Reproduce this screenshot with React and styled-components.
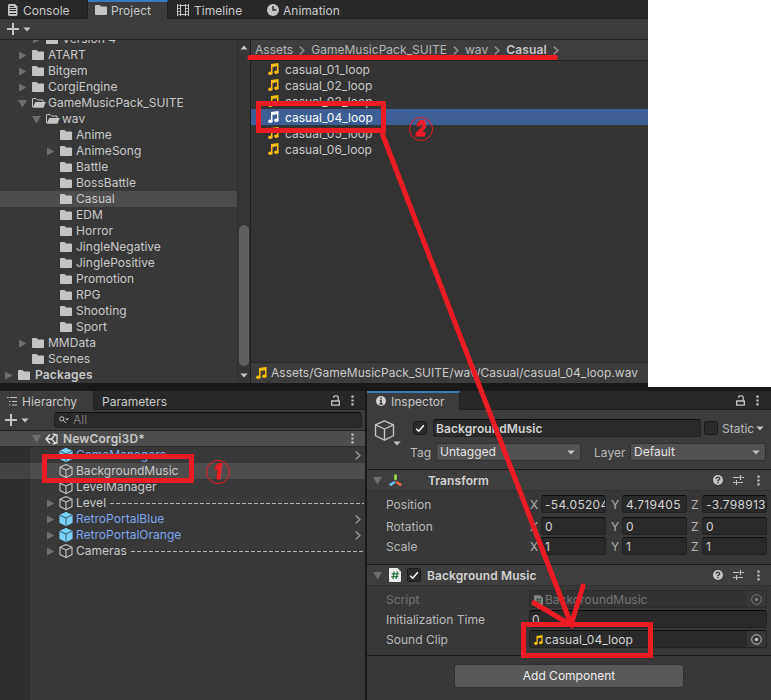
import React from "react";
import styled, { createGlobalStyle } from "styled-components";

const GlobalStyle = createGlobalStyle`
  * {
    box-sizing: border-box;
  }

  body {
    margin: 0;
    background: #fff;
    font-family: Inter, "Liberation Sans", sans-serif;
    font-size: 12px;
    line-height: 16px;
    letter-spacing: 0.02px;
    color: #c8c8c8;
    overflow: hidden;
  }

  svg {
    display: block;
    flex: none;
  }
`

const Page = styled.div`
  position: relative;
  width: 771px;
  height: 700px;
  display: flex;
  flex-direction: column;
`

const ProjectWindow = styled.section`
  width: 648px;
  height: 387px;
  flex: none;
  display: flex;
  flex-direction: column;
  background: #383838;
  border-bottom: 4px solid #191919;
`

const TabBar = styled.div`
  display: flex;
  flex: none;
  height: 19px;
  background: #282828;
`

const Tab = styled.div`
  display: flex;
  align-items: center;
  width: ${p => p.$width}px;
  padding: ${p => p.$pad || "0 0 0 7px"};
  gap: ${p => p.$gap || 5}px;
  background: ${p => p.$active ? "#3c3c3c" : "#282828"};
  border-top: 2px solid ${p => p.$focus ? "#3a79bb" : "transparent"};
  border-right: 1px solid ${p => p.$plain ? "transparent" : "#1f1f1f"};
  border-bottom: 1px solid ${p => p.$active ? "#3c3c3c" : "#1f1f1f"};
  white-space: nowrap;
`

const TabLabel = styled.span`
  padding-top: 2px;
`

const TabTools = styled.div`
  display: flex;
  flex: 1;
  align-items: center;
  justify-content: flex-end;
  gap: 11px;
  padding-right: ${p => p.$right}px;
  border-bottom: 1px solid #1f1f1f;
`

const Toolbar = styled.div`
  display: flex;
  align-items: center;
  flex: none;
  height: 21px;
  padding-left: ${p => p.$left}px;
  gap: 4px;
  background: #3c3c3c;
  border-bottom: 1px solid #202020;
`

const ProjectBody = styled.div`
  display: flex;
  flex: 1;
  min-height: 0;
`

const Tree = styled.div`
  width: 237px;
  height: 343px;
  overflow: hidden;
  display: flex;
  flex-direction: column;
  justify-content: flex-end;
`

const TreeRow = styled.div`
  display: flex;
  align-items: center;
  flex: none;
  height: 16px;
  padding-left: ${p => 4 + p.$depth * 14}px;
  background: ${p => p.$selected ? "#4d4d4d" : "transparent"};
  font-weight: ${p => p.$bold ? 600 : 400};
  letter-spacing: ${p => p.$bold ? "0.15px" : "inherit"};
  white-space: nowrap;
`

const FoldSlot = styled.span`
  width: ${p => p.$width || 14}px;
  display: flex;
  flex: none;
`

const TreeLabel = styled.span`
  margin-left: ${p => p.$gap || 3}px;
`

const Scrollbar = styled.div`
  width: 14px;
  display: flex;
  flex-direction: column;
  align-items: center;
  justify-content: space-between;
  padding: 5px 1px 5px 0;
  background: #353535;
  border-right: 1px solid #1d1d1d;
  border-left: 1px solid #303030;
`

const Thumb = styled.div`
  width: 10px;
  height: 141px;
  margin: auto 0 7px;
  border-radius: 5px;
  background: #5f5f5f;
`

const Files = styled.div`
  flex: 1;
  min-width: 0;
  display: flex;
  flex-direction: column;
  background: #333;
`

const Breadcrumb = styled.div`
  display: flex;
  align-items: center;
  height: 21px;
  padding-left: 4px;
  gap: 6px;
  background: #3e3e3e;
  border-bottom: 1px solid #242424;
  color: #b4b4b4;
  white-space: nowrap;

  b {
    font-weight: 600;
    letter-spacing: 0.15px;
    color: #c4c4c4;
  }
`

const FileList = styled.div`
  flex: 1;
`

const FileRow = styled.div`
  display: flex;
  align-items: center;
  height: 16px;
  padding-left: 17px;
  gap: 6px;
  background: ${p => p.$selected ? "#3e5f96" : "transparent"};
  color: ${p => p.$selected ? "#fff" : "#c8c8c8"};

  span {
    padding-top: 2px;
  }
`

const PathBar = styled.div`
  display: flex;
  align-items: center;
  height: 21px;
  padding-left: 5px;
  gap: 4px;
  background: #3c3c3c;
  border-top: 1px solid #282828;
  white-space: nowrap;
`

const BottomWindows = styled.div`
  display: flex;
  height: 313px;
  background: #191919;
  padding-top: 4px;
  gap: 2px;
`

const HierarchyWindow = styled.section`
  width: 365px;
  display: flex;
  flex-direction: column;
  background: #383838;
`

const SearchBox = styled.div`
  display: flex;
  align-items: center;
  width: 308px;
  height: 16px;
  margin-left: 21px;
  padding-left: 4px;
  gap: 4px;
  color: #7a7a7a;
  background: #2a2a2a;
  border: 1px solid #212121;
  border-top-color: #0f0f0f;
  border-radius: 4px;
`

const SceneRow = styled.div`
  display: flex;
  align-items: center;
  flex: none;
  height: 16px;
  padding: 0 11px 0 32px;
  background: #4d4d4d;
  border-bottom: 1px solid #2b2b2b;
  font-weight: 600;
  letter-spacing: 0.15px;
`

const Spacer = styled.span`
  flex: 1;
`

const ObjectList = styled.div`
  flex: 1;
  background: linear-gradient(90deg, #2e2e2e 30px, #383838 30px);
`

const ObjectRow = styled.div`
  display: flex;
  align-items: center;
  height: 16px;
  padding: 0 4px 0 46px;
  color: ${p => p.$prefab ? "#7fa7ec" : "#c8c8c8"};
  background: ${p => p.$selected ? "linear-gradient(90deg, #424242 30px, #4d4d4d 30px)" : "none"};
  white-space: nowrap;
`

const Dashes = styled.span`
  flex: 1;
  height: 1px;
  margin: 0 -3px 0 4px;
  background: repeating-linear-gradient(90deg, #b4b4b4 0 4px, transparent 4px 6px);
`

const InspectorWindow = styled.section`
  width: 404px;
  display: flex;
  flex-direction: column;
  background: #383838;
`

const ObjectHeader = styled.div`
  display: flex;
  height: 60px;
  flex: none;
  padding: 9px 4px 0 7px;
  background: #3c3c3c;
  border-bottom: 1px solid #1a1a1a;
`

const ObjectIcon = styled.div`
  display: flex;
  width: 28px;
  padding-top: 1px;
  align-items: flex-start;

  svg:last-child {
    margin: 21px 0 0 -2px;
  }
`

const HeaderLines = styled.div`
  flex: 1;
  display: flex;
  flex-direction: column;
  gap: 6px;
`

const Line = styled.div`
  display: flex;
  align-items: center;
  height: 18px;
  padding-left: ${p => p.$left || 0}px;
`

const Checkbox = styled.span`
  width: 14px;
  height: 14px;
  flex: none;
  display: flex;
  align-items: center;
  justify-content: center;
  background: #2a2a2a;
  border: 1px solid #1b1b1b;
  border-radius: 2px;
`

const Field = styled.div`
  display: flex;
  align-items: center;
  width: ${p => p.$width}px;
  height: 18px;
  flex: none;
  padding: 2px 0 0 2px;
  overflow: hidden;
  color: ${p => p.$dim ? "#747474" : "#d2d2d2"};
  background: ${p => p.$dim ? "#323232" : "#2a2a2a"};
  border: 1px solid ${p => p.$dim ? "#2c2c2c" : "#212121"};
  border-top-color: ${p => p.$dim ? "#2c2c2c" : "#0d0d0d"};
  border-radius: 3px;
  font-weight: ${p => p.$bold ? 600 : 400};
  letter-spacing: ${p => p.$bold ? "0.1px" : "inherit"};
  white-space: nowrap;
`

const NumberField = styled(Field)`
  padding-left: 3px;
  letter-spacing: 0.3px;
`

const Dropdown = styled.div`
  display: flex;
  align-items: center;
  justify-content: space-between;
  width: ${p => p.$width}px;
  height: 18px;
  padding: 0 5px 0 3px;
  color: #e4e4e4;
  background: #515151;
  border: 1px solid #303030;
  border-radius: 3px;
`

const Label = styled.span`
  flex: none;
  width: ${p => p.$width ? `${p.$width}px` : "auto"};
  padding-top: 2px;
  color: ${p => p.$dim ? "#747474" : "#b9b9b9"};
`

const Gap = styled.span`
  flex: none;
  width: ${p => p.$width}px;
`

const ComponentHeader = styled.div`
  display: flex;
  align-items: center;
  height: 21px;
  flex: none;
  padding: 0 11px 0 6px;
  background: #3e3e3e;
  border-bottom: 1px solid #303030;

  b {
    margin-left: ${p => p.$titleGap}px;
    padding-top: 2px;
    font-weight: 600;
    letter-spacing: 0.1px;
    color: #d2d2d2;
  }
`

const HeaderIcons = styled.span`
  display: flex;
  align-items: center;
  gap: 10px;
  margin-left: auto;

  svg:last-child {
    margin-left: 3px;
  }
`

const ComponentBody = styled.div`
  height: ${p => p.$height}px;
  flex: none;
  display: flex;
  flex-direction: column;
  gap: 2px;
  padding: 4px 0 0 19px;
  border-bottom: 1px solid #1a1a1a;
`

const VectorRow = styled.div`
  display: flex;
  align-items: center;
  height: 18px;
  margin-bottom: ${p => p.$after || 0}px;
`

const Axis = styled.span`
  width: ${p => p.$width}px;
  padding: 2px 0 0 ${p => p.$left || 0}px;
  color: #b0b0b0;
`

const Picker = styled.span`
  width: 19px;
  height: 16px;
  display: flex;
  align-items: center;
  justify-content: center;
  margin: -2px 0 0 auto;
  background: #373737;
`

const AddButton = styled.button`
  width: 230px;
  height: 24px;
  margin: 8px 0 0 87px;
  padding: 0;
  font: inherit;
  color: #eee;
  background: #585858;
  border: 1px solid #303030;
  border-radius: 3px;
`

const Annotations = styled.svg`
  position: absolute;
  top: 0;
  left: 0;
  fill: none;
  stroke: #ed1c24;
  stroke-width: 5;
`

const StepBadge = styled.div`
  position: absolute;
  left: ${p => p.$x}px;
  top: ${p => p.$y}px;
  width: 24px;
  height: 24px;
  display: flex;
  align-items: center;
  justify-content: center;
  border: 1.5px solid #ed1c24;
  border-radius: 50%;
  color: #ed1c24;
  font: 900 21px/20px Inter, sans-serif;
  letter-spacing: 0;
  -webkit-text-stroke: 1.2px #ed1c24;

  span {
    transform: skewX(-7deg) scaleX(0.72);
  }
`

const Folder = () => (
    <svg width="12" height="10" viewBox="0 0 12 10" fill="#c4c4c4">
        <path d="M0 1Q0 0 1 0H4.5L6 1.5H11Q12 1.5 12 2.5V9Q12 10 11 10H1Q0 10 0 9Z"/>
    </svg>
);

const OpenFolder = () => (
    <svg width="14" height="10" viewBox="0 0 14 10">
        <path d="M.5 9V1Q.5.5 1 .5H4L5.5 2H11V4" fill="none" stroke="#c4c4c4"/>
        <path d="M3.2 4H13.7L11.5 9.7H.7Z" fill="#c4c4c4"/>
    </svg>
);

const Fold = ({open}) => (
    <svg width="9" height="9" viewBox="0 0 9 9" fill="#6e6e6e">
        <path d={open ? "M0 1H9L4.5 8.5Z" : "M1 .5V8.5L8.5 4.5Z"}/>
    </svg>
);

const Caret = ({up}) => (
    <svg width="8" height="5" viewBox="0 0 8 5" fill="#c4c4c4">
        <path d={up ? "M.5 4.5H7.5L4 .5Z" : "M.3.5H7.7L4 4.5Z"}/>
    </svg>
);

const Plus = () => (
    <svg width="12" height="12" viewBox="0 0 12 12" fill="#c4c4c4">
        <path d="M5 0H7V5H12V7H7V12H5V7H0V5H5Z"/>
    </svg>
);

const Note = ({color = "#ffc107", size = 12}) => (
    <svg width={size - 1} height={size} viewBox="0 0 11 12" fill={color}>
        <path d="M3 1L10.5 0V9.5H9V3.2L4.5 3.9V10.5H3Z"/>
        <ellipse cx="2.3" cy="10.2" rx="2.2" ry="1.8"/>
        <ellipse cx="8.3" cy="9.3" rx="2.2" ry="1.8"/>
    </svg>
);

const Chevron = () => (
    <svg width="6" height="9" viewBox="0 0 6 9" fill="none" stroke="#8c8c8c" strokeWidth="1.6">
        <path d="M.8 .7L4.8 4.5L.8 8.3"/>
    </svg>
);

const Cube = ({prefab, size = 14}) => (
    <svg width={size} height={size} viewBox="0 0 14 14" strokeWidth={size > 14 ? 0.9 : 1.1} strokeLinejoin="round">
        <path d="M7 .6L13 3.3V10.5L7 13.4L1 10.5V3.3Z" fill={prefab ? "#7bd3fb" : "none"} stroke={prefab ? "#7bd3fb" : "#c4c4c4"}/>
        <path d="M1 3.3L7 6L13 3.3M7 6V13.4" fill="none" stroke={prefab ? "#35647d" : "#c4c4c4"}/>
    </svg>
);

const Lock = () => (
    <svg width="9" height="11" viewBox="0 0 9 11" fill="none" stroke="#c4c4c4" strokeWidth="1.3">
        <path d="M.7 6H8.3V10.2H.7ZM7.2 6V2.5Q7.2.8 5.2.8H4.2Q2.6.8 2.6 2.7"/>
    </svg>
);

const Dots = () => (
    <svg width="3" height="11" viewBox="0 0 3 11" fill="#c4c4c4">
        <path d="M.4.5H2.6V2.7H.4ZM.4 4.4H2.6V6.6H.4ZM.4 8.3H2.6V10.5H.4Z"/>
    </svg>
);

const Check = () => (
    <svg width="10" height="9" viewBox="0 0 10 9" fill="none" stroke="#fff" strokeWidth="1.5">
        <path d="M1.2 4.8L3.7 7.2L8.8 1.2"/>
    </svg>
);

const ConsoleIcon = () => (
    <svg width="11" height="12" viewBox="0 0 11 12">
        <path d="M2 0H8L10.5 2.5V11L9.5 12H2L1 11V1Z" fill="#c4c4c4"/>
        <path d="M2.5 2.5H7M2.5 4.5H9M2.5 6.5H9M2.5 9.5H9" stroke="#282828"/>
    </svg>
);

const TimelineIcon = () => (
    <svg width="12" height="12" viewBox="0 0 12 12" fill="none" stroke="#c4c4c4">
        <path d="M.5 0V12M3.5 0V12M8.5 0V12M11.5 0V12M3 1.5H9M3 10.5H9"/>
        <path d="M.5 1.5H3M.5 4.5H3M.5 7.5H3M.5 10.5H3M9 1.5H12M9 4.5H12M9 7.5H12M9 10.5H12" strokeWidth=".8"/>
    </svg>
);

const ClockIcon = () => (
    <svg width="12" height="12" viewBox="0 0 12 12">
        <circle cx="6" cy="6" r="6" fill="#c4c4c4"/>
        <path d="M6 2V6H9.5" fill="none" stroke="#282828" strokeWidth="1.4"/>
    </svg>
);

const HierarchyIcon = () => (
    <svg width="11" height="9" viewBox="0 0 11 9" stroke="#c4c4c4">
        <path d="M0 .5H2M3 .5H10M2 4.5H3.5M5 4.5H10M2 8H3.5M5 8H10"/>
    </svg>
);

const InfoIcon = () => (
    <svg width="10" height="10" viewBox="0 0 10 10">
        <circle cx="5" cy="5" r="5" fill="#d2d2d2"/>
        <path d="M5 1.5V3.1M3.7 4.4H5V7.7M3.5 8H6.6" fill="none" stroke="#333" strokeWidth="1.4"/>
    </svg>
);

const SearchIcon = () => (
    <svg width="10" height="8" viewBox="0 0 10 8" fill="none" stroke="#c4c4c4">
        <circle cx="2.8" cy="2.8" r="2.1"/>
        <path d="M4.3 4.3L7 7"/>
        <path d="M6.3 2.5H10L8.1 4.5Z" fill="#c4c4c4" stroke="none"/>
    </svg>
);

const UnityIcon = () => (
    <svg width="13" height="12" viewBox="0 0 13 12" fill="none" stroke="#e0e0e0" strokeWidth="1.3">
        <path d="M5 1.5L1 6L5 10.5M7.5.8L12 2V4.5M7.5 11.2L12 10V7.5M1 6H6.5M6.5 6L10.5 1.6M6.5 6L10.5 10.4M12 4V8"/>
    </svg>
);

const TransformIcon = () => (
    <svg width="13" height="13" viewBox="0 0 13 13" fill="none" strokeWidth="2.6" strokeLinecap="round">
        <path d="M6.5 1.5V5" stroke="#9be045"/>
        <path d="M5 8.5L1.7 10.6" stroke="#66c4f5"/>
        <path d="M8 8.5L11.3 10.6" stroke="#f4683c"/>
    </svg>
);

const ScriptIcon = ({dim, small}) => (
    <svg width={small ? 9 : 12} height={small ? 11 : 14} viewBox="0 0 12 14">
        <path d="M0 1Q0 0 1 0H8.5L12 3.5V13Q12 14 11 14H1Q0 14 0 13Z" fill={dim ? "#858585" : "#eee"}/>
        <path d="M5.2 3.5L4 11M8.4 3.5L7.2 11M2.8 5.8H9.8M2.3 8.7H9.3" stroke={dim ? "#355a43" : "#25733b"} strokeWidth="1.3"/>
    </svg>
);

const HelpIcon = () => (
    <svg width="10" height="10" viewBox="0 0 10 10">
        <circle cx="5" cy="5" r="5" fill="#c4c4c4"/>
        <path d="M3.2 3.8Q3.3 2.2 5 2.2T6.7 3.8Q6.7 4.6 5 5.3V6.2M5 7V8.3" fill="none" stroke="#333" strokeWidth="1.3"/>
    </svg>
);

const PresetIcon = () => (
    <svg width="11" height="10" viewBox="0 0 11 10" stroke="#c4c4c4" strokeWidth="1.2">
        <path d="M0 2.5H6.5M8.5 2.5H11M7.5 0V5M0 7.5H2.5M4.5 7.5H10M3.5 5V10"/>
    </svg>
);

const TargetIcon = ({dim}) => (
    <svg width="11" height="11" viewBox="0 0 11 11">
        <circle cx="5.5" cy="5.5" r="4.8" fill="none" stroke={dim ? "#7a7a7a" : "#c4c4c4"}/>
        <circle cx="5.5" cy="5.5" r="1.8" fill={dim ? "#7a7a7a" : "#c4c4c4"}/>
    </svg>
);

const folders = [
    {name: "Version 4", depth: 2, fold: "closed"},
    {name: "ATART", depth: 1, fold: "closed"},
    {name: "Bitgem", depth: 1, fold: "closed"},
    {name: "CorgiEngine", depth: 1, fold: "closed"},
    {name: "GameMusicPack_SUITE", depth: 1, fold: "open"},
    {name: "wav", depth: 2, fold: "open"},
    {name: "Anime", depth: 3},
    {name: "AnimeSong", depth: 3, fold: "closed"},
    {name: "Battle", depth: 3},
    {name: "BossBattle", depth: 3},
    {name: "Casual", depth: 3, selected: true},
    {name: "EDM", depth: 3},
    {name: "Horror", depth: 3},
    {name: "JingleNegative", depth: 3},
    {name: "JinglePositive", depth: 3},
    {name: "Promotion", depth: 3},
    {name: "RPG", depth: 3},
    {name: "Shooting", depth: 3},
    {name: "Sport", depth: 3},
    {name: "MMData", depth: 1, fold: "closed"},
    {name: "Scenes", depth: 1},
    {name: "Packages", depth: 0, fold: "closed", bold: true},
];

const clips = ["casual_01_loop", "casual_02_loop", "casual_03_loop", "casual_04_loop", "casual_05_loop", "casual_06_loop"];

const objects = [
    {name: "GameManagers", prefab: true, arrow: true},
    {name: "BackgroundMusic", selected: true},
    {name: "LevelManager"},
    {name: "Level", fold: true, dashes: true},
    {name: "RetroPortalBlue", fold: true, prefab: true, arrow: true},
    {name: "RetroPortalOrange", fold: true, prefab: true, arrow: true},
    {name: "Cameras", fold: true, dashes: true},
];

const vectors = [
    {name: "Position", values: ["-54.05204", "4.719405", "-3.798913"], after: 2},
    {name: "Rotation", values: ["0", "0", "0"]},
    {name: "Scale", values: ["1", "1", "1"]},
];

const Project = () => (
    <ProjectWindow>
        <TabBar>
            <Tab $width={88}><ConsoleIcon/><TabLabel>Console</TabLabel></Tab>
            <Tab $width={80} $active $focus $gap={4}><Folder/><TabLabel>Project</TabLabel></Tab>
            <Tab $width={90} $plain $pad="0 0 0 9px"><TimelineIcon/><TabLabel>Timeline</TabLabel></Tab>
            <Tab $width={98} $plain $pad="0 0 0 9px" $gap={4}><ClockIcon/><TabLabel>Animation</TabLabel></Tab>
            <TabTools $right={0}/>
        </TabBar>
        <Toolbar $left={7}><Plus/><Caret/></Toolbar>
        <ProjectBody>
            <Tree>
                {folders.map(f => (
                    <TreeRow key={f.name} $depth={f.depth} $selected={f.selected} $bold={f.bold}>
                        <FoldSlot>{f.fold && <Fold open={f.fold === "open"}/>}</FoldSlot>
                        {f.fold === "open" ? <OpenFolder/> : <Folder/>}
                        <TreeLabel $gap={f.fold === "open" ? 2 : f.bold ? 5 : 4}>{f.name}</TreeLabel>
                    </TreeRow>
                ))}
            </Tree>
            <Scrollbar><Caret up/><Thumb/><Caret/></Scrollbar>
            <Files>
                <Breadcrumb>
                    <span>Assets</span><Chevron/>
                    <span>GameMusicPack_SUITE</span><Chevron/>
                    <span>wav</span><Chevron/>
                    <b>Casual</b><Chevron/>
                </Breadcrumb>
                <FileList>
                    {clips.map((name, i) => (
                        <FileRow key={name} $selected={i === 3}>
                            <Note color={i === 3 ? "#fff" : undefined}/><span>{name}</span>
                        </FileRow>
                    ))}
                </FileList>
                <PathBar><Note/>Assets/GameMusicPack_SUITE/wav/Casual/casual_04_loop.wav</PathBar>
            </Files>
        </ProjectBody>
    </ProjectWindow>
);

const Hierarchy = () => (
    <HierarchyWindow>
        <TabBar>
            <Tab $width={94} $active $gap={4}><HierarchyIcon/><TabLabel>Hierarchy</TabLabel></Tab>
            <Tab $width={90} $plain $pad="0 0 0 8px"><TabLabel>Parameters</TabLabel></Tab>
            <TabTools $right={11}><Lock/><Dots/></TabTools>
        </TabBar>
        <Toolbar $left={5}><Plus/><Caret/><SearchBox><SearchIcon/>All</SearchBox></Toolbar>
        <SceneRow>
            <Fold open/>
            <TreeLabel $gap={4}><UnityIcon/></TreeLabel>
            <TreeLabel $gap={5}>NewCorgi3D*</TreeLabel>
            <Spacer/>
            <Dots/>
        </SceneRow>
        <ObjectList>
            {objects.map(o => (
                <ObjectRow key={o.name} $prefab={o.prefab} $selected={o.selected}>
                    <FoldSlot $width={13}>{o.fold && <Fold/>}</FoldSlot>
                    <Cube prefab={o.prefab}/>
                    <TreeLabel>{o.name}</TreeLabel>
                    {o.dashes ? <Dashes/> : <Spacer/>}
                    {o.arrow && <Chevron/>}
                </ObjectRow>
            ))}
        </ObjectList>
    </HierarchyWindow>
);

const ComponentTools = () => (
    <HeaderIcons><HelpIcon/><PresetIcon/><Dots/></HeaderIcons>
);

const Inspector = () => (
    <InspectorWindow>
        <TabBar>
            <Tab $width={93} $active $focus $pad="0 0 0 9px"><InfoIcon/><TabLabel>Inspector</TabLabel></Tab>
            <TabTools $right={12}><Lock/><Dots/></TabTools>
        </TabBar>
        <ObjectHeader>
            <ObjectIcon><Cube size={21}/><Caret/></ObjectIcon>
            <HeaderLines>
                <Line $left={11}>
                    <Checkbox><Check/></Checkbox>
                    <Gap $width={6}/>
                    <Field $width={268} $bold>BackgroundMusic</Field>
                    <Gap $width={3}/>
                    <Checkbox/>
                    <Gap $width={4}/>
                    <Label>Static</Label>
                    <Gap $width={2}/>
                    <Caret/>
                </Line>
                <Line $left={8}>
                    <Label $width={26}>Tag</Label>
                    <Dropdown $width={145}>Untagged<Caret/></Dropdown>
                    <Gap $width={13}/>
                    <Label $width={36}>Layer</Label>
                    <Dropdown $width={136}>Default<Caret/></Dropdown>
                </Line>
            </HeaderLines>
        </ObjectHeader>
        <ComponentHeader $titleGap={26}>
            <Fold open/><Gap $width={7}/><TransformIcon/><b>Transform</b><ComponentTools/>
        </ComponentHeader>
        <ComponentBody $height={74}>
            {vectors.map(v => (
                <VectorRow key={v.name} $after={v.after}>
                    <Label $width={143}>{v.name}</Label>
                    <Axis $width={12} $left={1}>X</Axis><NumberField $width={65}>{v.values[0]}</NumberField>
                    <Gap $width={5}/>
                    <Axis $width={11}>Y</Axis><NumberField $width={65}>{v.values[1]}</NumberField>
                    <Gap $width={4}/>
                    <Axis $width={11}>Z</Axis><NumberField $width={65}>{v.values[2]}</NumberField>
                </VectorRow>
            ))}
        </ComponentBody>
        <ComponentHeader $titleGap={6}>
            <Fold open/><Gap $width={7}/><ScriptIcon/><Gap $width={6}/>
            <Checkbox><Check/></Checkbox><b>Background Music</b><ComponentTools/>
        </ComponentHeader>
        <ComponentBody $height={70}>
            <VectorRow>
                <Label $width={143} $dim>Script</Label>
                <Field $width={238} $dim>
                    <Gap $width={2}/><ScriptIcon dim small/><Gap $width={2}/>BackgroundMusic
                    <Picker><TargetIcon dim/></Picker>
                </Field>
            </VectorRow>
            <VectorRow>
                <Label $width={143}>Initialization Time</Label>
                <Field $width={238}>0</Field>
            </VectorRow>
            <VectorRow>
                <Label $width={143}>Sound Clip</Label>
                <Field $width={238}>
                    <Gap $width={2}/><Note size={10}/><Gap $width={2}/>casual_04_loop
                    <Picker><TargetIcon/></Picker>
                </Field>
            </VectorRow>
        </ComponentBody>
        <AddButton>Add Component</AddButton>
    </InspectorWindow>
);

export default function App() {
    return (
        <Page>
            <GlobalStyle/>
            <Project/>
            <BottomWindows>
                <Hierarchy/>
                <Inspector/>
            </BottomWindows>
            <Annotations width="771" height="700" viewBox="0 0 771 700">
                <path d="M250 57.5H555.5" strokeLinecap="round"/>
                <rect x="258.5" y="103.5" width="125" height="27"/>
                <rect x="44.5" y="456.5" width="147" height="24"/>
                <rect x="523.5" y="624.5" width="127" height="31"/>
                <path d="M382 133L571 624"/>
                <path d="M534 603L571 625L583 586" strokeLinecap="round"/>
            </Annotations>
            <StepBadge $x={206} $y={460}><span>1</span></StepBadge>
            <StepBadge $x={409} $y={117}><span>2</span></StepBadge>
        </Page>
    );
}
